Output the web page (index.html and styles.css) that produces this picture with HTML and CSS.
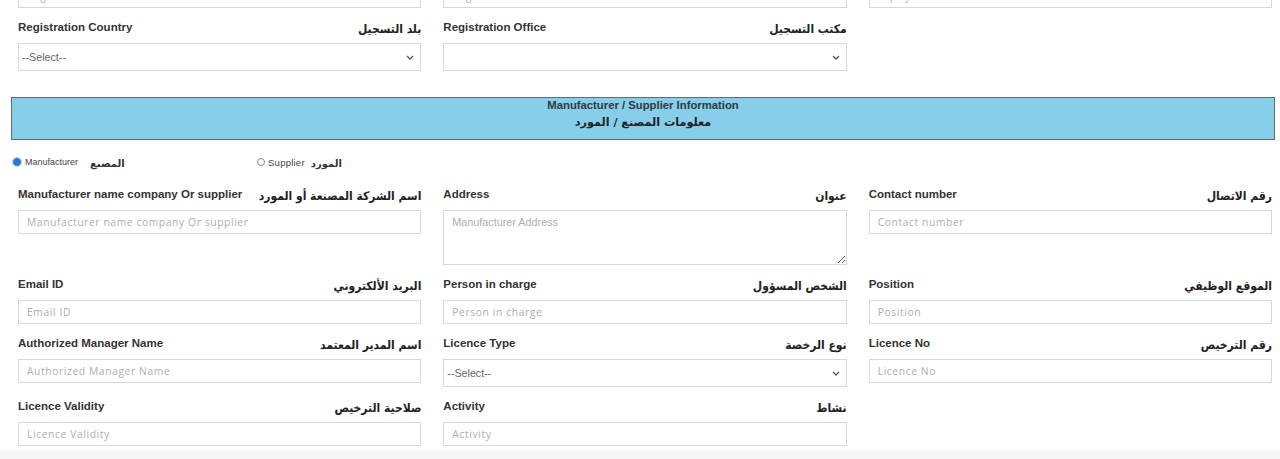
FILE: index.html
```html
<!DOCTYPE html>
<html lang="en">
<head>
<meta charset="utf-8">
<title>Manufacturer / Supplier Information</title>
<link rel="stylesheet" href="styles.css">
</head>
<body>
<div class="page">
  <div class="grid row first-row">
    <div class="field">
      <div class="label-line"><span class="en">Registration No</span><span class="ar">رقم التسجيل</span></div>
      <input class="text" type="text" placeholder="Registration Number">
    </div>
    <div class="field">
      <div class="label-line"><span class="en">Registration Date</span><span class="ar">تاريخ التسجيل</span></div>
      <input class="text" type="text" placeholder="Registration Date">
    </div>
    <div class="field">
      <div class="label-line"><span class="en">Expiry Date</span><span class="ar">تاريخ الانتهاء</span></div>
      <input class="text" type="text" placeholder="Expiry Date">
    </div>
  </div>

  <div class="grid row">
    <div class="field">
      <div class="label-line"><span class="en">Registration Country</span><span class="ar">بلد التسجيل</span></div>
      <div class="select-wrap">
        <select class="select"><option>--Select--</option></select>
        <svg class="chev" width="8" height="5" viewBox="0 0 8 5"><path d="M1 1l3 3 3-3" fill="none" stroke="#555" stroke-width="1.3"/></svg>
      </div>
    </div>
    <div class="field">
      <div class="label-line"><span class="en">Registration Office</span><span class="ar">مكتب التسجيل</span></div>
      <div class="select-wrap">
        <select class="select"><option></option></select>
        <svg class="chev" width="8" height="5" viewBox="0 0 8 5"><path d="M1 1l3 3 3-3" fill="none" stroke="#555" stroke-width="1.3"/></svg>
      </div>
    </div>
    <div class="field"></div>
  </div>

  <div class="band">
    <div class="band-en">Manufacturer / Supplier Information</div>
    <div class="band-ar">معلومات المصنع / المورد</div>
  </div>

  <div class="radio-row">
    <label class="opt opt-first"><input class="radio" type="radio" name="kind" checked><span class="opt-en">Manufacturer</span><span class="opt-ar">المصنع</span></label>
    <label class="opt"><input class="radio" type="radio" name="kind"><span class="opt-en opt-en-s">Supplier</span><span class="opt-ar opt-ar-s">المورد</span></label>
  </div>

  <div class="grid row">
    <div class="field">
      <div class="label-line"><span class="en">Manufacturer name company Or supplier</span><span class="ar">اسم الشركة المصنعة أو المورد</span></div>
      <input class="text" type="text" placeholder="Manufacturer name company Or supplier">
    </div>
    <div class="field">
      <div class="label-line"><span class="en">Address</span><span class="ar">عنوان</span></div>
      <textarea class="area" placeholder="Manufacturer Address"></textarea>
    </div>
    <div class="field">
      <div class="label-line"><span class="en">Contact number</span><span class="ar">رقم الاتصال</span></div>
      <input class="text" type="text" placeholder="Contact number">
    </div>
  </div>

  <div class="grid row">
    <div class="field">
      <div class="label-line"><span class="en">Email ID</span><span class="ar">البريد الألكتروني</span></div>
      <input class="text" type="text" placeholder="Email ID">
    </div>
    <div class="field">
      <div class="label-line"><span class="en">Person in charge</span><span class="ar">الشخص المسؤول</span></div>
      <input class="text" type="text" placeholder="Person in charge">
    </div>
    <div class="field">
      <div class="label-line"><span class="en">Position</span><span class="ar">الموقع الوظيفي</span></div>
      <input class="text" type="text" placeholder="Position">
    </div>
  </div>

  <div class="grid row">
    <div class="field">
      <div class="label-line"><span class="en">Authorized Manager Name</span><span class="ar">اسم المدير المعتمد</span></div>
      <input class="text" type="text" placeholder="Authorized Manager Name">
    </div>
    <div class="field">
      <div class="label-line"><span class="en">Licence Type</span><span class="ar">نوع الرخصة</span></div>
      <div class="select-wrap">
        <select class="select"><option>--Select--</option></select>
        <svg class="chev" width="8" height="5" viewBox="0 0 8 5"><path d="M1 1l3 3 3-3" fill="none" stroke="#555" stroke-width="1.3"/></svg>
      </div>
    </div>
    <div class="field">
      <div class="label-line"><span class="en">Licence No</span><span class="ar">رقم الترخيص</span></div>
      <input class="text" type="text" placeholder="Licence No">
    </div>
  </div>

  <div class="grid row last-row">
    <div class="field">
      <div class="label-line"><span class="en">Licence Validity</span><span class="ar">صلاحية الترخيص</span></div>
      <input class="text" type="text" placeholder="Licence Validity">
    </div>
    <div class="field">
      <div class="label-line"><span class="en">Activity</span><span class="ar">نشاط</span></div>
      <input class="text" type="text" placeholder="Activity">
    </div>
    <div class="field"></div>
  </div>
</div>
<div class="page-foot"></div>
</body>
</html>
```

FILE: styles.css
```css
html, body {
  margin: 0;
  padding: 0;
  background: #ffffff;
  font-family: "Liberation Sans", Arial, sans-serif;
  color: #333;
  overflow: hidden;
}

.page {
  padding: 0 5px 0 11px;
  background: #fff;
}

.grid {
  display: grid;
  grid-template-columns: repeat(3, 1fr);
  column-gap: 22px;
  padding: 0 3px 0 7px;
  align-items: start;
}

.row {
  margin-bottom: 11px;
}

.first-row {
  margin-top: -40px;
}

.last-row {
  margin-bottom: 4px;
}

.field {
  display: flex;
  flex-direction: column;
  min-width: 0;
}

.label-line {
  height: 16px;
  margin-bottom: 8px;
  display: flex;
  justify-content: space-between;
  align-items: center;
}

.en {
  font-family: "Liberation Sans", Arial, sans-serif;
  font-weight: bold;
  font-size: 11.5px;
  color: #333;
  white-space: nowrap;
}

.ar {
  font-family: "DejaVu Sans", sans-serif;
  font-weight: bold;
  font-size: 12px;
  font-stretch: semi-condensed;
  color: #222;
  white-space: nowrap;
  direction: rtl;
  padding-top: 4px;
}

.text {
  box-sizing: border-box;
  width: 100%;
  height: 24px;
  margin: 0;
  border: 1px solid #d8d8d8;
  border-radius: 0;
  padding: 0 8px;
  background: #fff;
  font-family: "Open Sans", sans-serif;
  font-size: 10.3px;
  letter-spacing: 0.6px;
  color: #555;
  outline: none;
}

.text::placeholder {
  color: #adadad;
}

.area {
  box-sizing: border-box;
  width: 100%;
  height: 55px;
  margin: 0;
  border: 1px solid #d8d8d8;
  border-radius: 0;
  padding: 5px 8px;
  background: #fff;
  font-family: "Liberation Sans", Arial, sans-serif;
  font-size: 10.8px;
  color: #555;
  resize: vertical;
  outline: none;
  display: block;
}

.area::placeholder {
  color: #adadad;
}

.select-wrap {
  position: relative;
  height: 28px;
}

.select {
  box-sizing: border-box;
  width: 100%;
  height: 28px;
  margin: 0;
  border: 1px solid #d8d8d8;
  border-radius: 0;
  padding: 0 3px;
  background: #fff;
  -webkit-appearance: none;
  appearance: none;
  font-family: "Liberation Sans", Arial, sans-serif;
  font-size: 10.7px;
  color: #666;
  outline: none;
}

.chev {
  position: absolute;
  right: 7px;
  top: 12px;
  pointer-events: none;
}

.band {
  box-sizing: border-box;
  height: 43px;
  margin-top: 26px;
  border: 1px solid #5d6b73;
  background: #87ceea;
  text-align: center;
}

.band-en {
  font-family: "Liberation Sans", Arial, sans-serif;
  font-weight: bold;
  font-size: 11.3px;
  line-height: 14px;
  color: #2f3a40;
}

.band-ar {
  font-family: "DejaVu Sans", sans-serif;
  font-weight: bold;
  font-size: 11.2px;
  line-height: 22px;
  color: #1e2428;
  direction: rtl;
}

.radio-row {
  display: flex;
  align-items: center;
  height: 16px;
  margin: 14px 0 16px;
  padding-left: 2px;
}

.opt {
  display: flex;
  align-items: center;
}

.opt-first {
  width: 244px;
}

.radio {
  -webkit-appearance: none;
  appearance: none;
  box-sizing: border-box;
  width: 8px;
  height: 8px;
  margin: 0 3px 0 0;
  border: 1px solid #8a8a8a;
  border-radius: 50%;
  background: #fff;
}

.radio:checked {
  border-color: #2b78d6;
  background: #2b78d6;
  box-shadow: 0 0 0 1px #b9d3f3;
  margin-right: 4px;
}

.opt-en {
  font-family: "Liberation Sans", Arial, sans-serif;
  font-size: 9px;
  color: #444;
}

.opt-en-s {
  font-size: 9.6px;
  letter-spacing: 0.2px;
}

.opt-ar {
  font-family: "DejaVu Sans", sans-serif;
  font-weight: bold;
  font-size: 10px;
  color: #333;
  margin-left: 12px;
  padding-top: 2px;
}

.opt-ar-s {
  margin-left: 6px;
}

.page-foot {
  height: 9px;
  background: #f6f6f6;
}
```
